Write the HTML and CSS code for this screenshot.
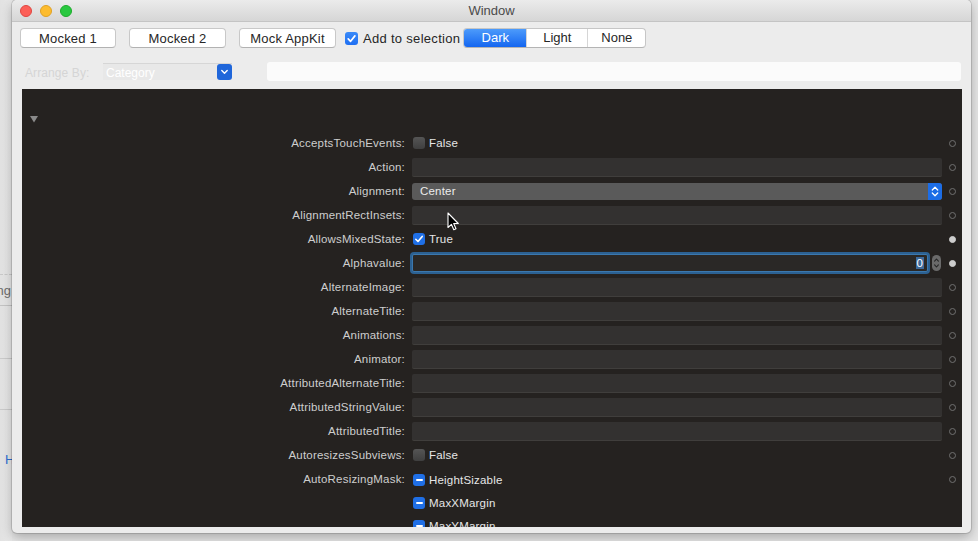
FILE: index.html
```html
<!DOCTYPE html>
<html>
<head>
<meta charset="utf-8">
<title>Window</title>
<link rel="stylesheet" href="styles.css">
</head>
<body>
<div class="screen">
  <div class="behind">
    <div class="bh-a"></div>
    <div class="bh-text"><span>Spacing</span></div>
    <div class="bh-b"></div>
    <div class="bh-c"></div>
    <div class="bh-gap"></div>
    <div class="bh-link">Help</div>
  </div>

  <div class="window">
    <div class="titlebar">
      <div class="lights">
        <span class="light red"></span>
        <span class="light yellow"></span>
        <span class="light green"></span>
      </div>
      <div class="title">Window</div>
      <div></div>
    </div>

    <div class="toolbar">
      <button class="btn w96">Mocked 1</button>
      <button class="btn w97">Mocked 2</button>
      <button class="btn w97 last">Mock AppKit</button>
      <span class="tb-check"><svg viewBox="0 0 13 13" width="13" height="13"><path d="M3.2 6.9 L5.6 9.3 L9.9 3.9" fill="none" stroke="#fff" stroke-width="1.7" stroke-linecap="round" stroke-linejoin="round"/></svg></span>
      <span class="tb-label">Add to selection</span>
      <div class="seg">
        <span class="seg-item on dark">Dark</span>
        <span class="seg-item light-s">Light</span>
        <span class="seg-item none-s">None</span>
      </div>
    </div>

    <div class="filterbar">
      <span class="arrange">Arrange By:</span>
      <div class="popup-light">
        <span class="pl-text">Category</span>
        <span class="pl-btn"><svg viewBox="0 0 15 16" width="15" height="16"><path d="M4.8 6.6 L7.5 9.3 L10.2 6.6" fill="none" stroke="#fff" stroke-width="1.4" stroke-linecap="round" stroke-linejoin="round"/></svg></span>
      </div>
      <div class="search"></div>
    </div>

    <div class="panel">
      <div class="disclosure"><svg width="8" height="7" viewBox="0 0 8 7"><path d="M0 0 H8 L4 6.5 Z" fill="#8a8a8a"/></svg></div>
      <div class="rows">
        <div class="label">AcceptsTouchEvents:</div>
        <div class="cv"><span class="check off"></span><span>False</span></div>
        <div class="ind"><span class="dot"></span></div>

        <div class="label">Action:</div>
        <div class="field"></div>
        <div class="ind"><span class="dot"></span></div>

        <div class="label">Alignment:</div>
        <div class="popup-dark"><span class="pd-text">Center</span><span class="pd-btn"><svg viewBox="0 0 14 17" width="14" height="17"><path d="M4.3 7 L7 4.3 L9.7 7 M4.3 10 L7 12.7 L9.7 10" fill="none" stroke="#fff" stroke-width="1.3" stroke-linecap="round" stroke-linejoin="round"/></svg></span></div>
        <div class="ind"><span class="dot"></span></div>

        <div class="label">AlignmentRectInsets:</div>
        <div class="field"></div>
        <div class="ind"><span class="dot"></span></div>

        <div class="label">AllowsMixedState:</div>
        <div class="cv"><span class="check on"><svg viewBox="0 0 12 12" width="12" height="12"><path d="M2.8 6.3 L5 8.5 L9.2 3.4" fill="none" stroke="#fff" stroke-width="1.6" stroke-linecap="round" stroke-linejoin="round"/></svg></span><span>True</span></div>
        <div class="ind"><span class="dot filled"></span></div>

        <div class="label">Alphavalue:</div>
        <div class="alpha">
          <div class="alpha-field"><span class="sel">0</span></div>
          <span class="stepper"><svg viewBox="0 0 9 16" width="9" height="16"><path d="M2.6 6.2 L4.5 4 L6.4 6.2 M2.6 9.8 L4.5 12 L6.4 9.8" fill="none" stroke="#262626" stroke-width="1.1" stroke-linecap="round" stroke-linejoin="round"/></svg></span>
        </div>
        <div class="ind"><span class="dot filled"></span></div>

        <div class="label">AlternateImage:</div>
        <div class="field"></div>
        <div class="ind"><span class="dot"></span></div>

        <div class="label">AlternateTitle:</div>
        <div class="field"></div>
        <div class="ind"><span class="dot"></span></div>

        <div class="label">Animations:</div>
        <div class="field"></div>
        <div class="ind"><span class="dot"></span></div>

        <div class="label">Animator:</div>
        <div class="field"></div>
        <div class="ind"><span class="dot"></span></div>

        <div class="label">AttributedAlternateTitle:</div>
        <div class="field"></div>
        <div class="ind"><span class="dot"></span></div>

        <div class="label">AttributedStringValue:</div>
        <div class="field"></div>
        <div class="ind"><span class="dot"></span></div>

        <div class="label">AttributedTitle:</div>
        <div class="field"></div>
        <div class="ind"><span class="dot"></span></div>

        <div class="label">AutoresizesSubviews:</div>
        <div class="cv"><span class="check off"></span><span>False</span></div>
        <div class="ind"><span class="dot"></span></div>

        <div class="label top">AutoResizingMask:</div>
        <div class="masklist">
          <div class="cv mitem"><span class="check mixed"><span class="dash"></span></span><span>HeightSizable</span></div>
          <div class="cv mitem"><span class="check mixed"><span class="dash"></span></span><span>MaxXMargin</span></div>
          <div class="cv mitem"><span class="check mixed"><span class="dash"></span></span><span>MaxYMargin</span></div>
        </div>
        <div class="ind top"><span class="dot"></span></div>
      </div>
    </div>
  </div>

  <svg class="cursor" width="13" height="19" viewBox="0 0 13 19"><path d="M1 1 L1 15.5 L4.4 12.3 L6.8 17.8 L9 16.8 L6.7 11.5 L11.3 11.5 Z" fill="#000" stroke="#fff" stroke-width="1.1" stroke-linejoin="round"/></svg>
</div>
</body>
</html>
```

FILE: styles.css
```css
html, body {
  margin: 0;
  padding: 0;
}

body {
  width: 978px;
  height: 541px;
  overflow: hidden;
}

.screen {
  position: relative;
  width: 978px;
  height: 541px;
  overflow: hidden;
  display: flex;
  align-items: flex-start;
  background: #e6e6e6;
  font-family: "Liberation Sans", Arial, sans-serif;
}

/* app behind the window */
.behind {
  width: 12px;
  height: 541px;
  flex-shrink: 0;
  display: flex;
  flex-direction: column;
  overflow: hidden;
  background: linear-gradient(90deg, #e2e2e2, #e9e9e9);
}

.bh-a {
  height: 274px;
  border-bottom: 1px dashed #c9c9c9;
  flex-shrink: 0;
}

.bh-text {
  height: 30px;
  flex-shrink: 0;
  border-bottom: 1px solid #c4c4c4;
  display: flex;
  justify-content: flex-end;
  align-items: center;
  font-size: 13px;
  color: #6e6e6e;
  white-space: nowrap;
  padding-right: 1px;
}

.bh-b {
  height: 52px;
  flex-shrink: 0;
  border-bottom: 1px solid #cbcbcb;
}

.bh-c {
  height: 50px;
  flex-shrink: 0;
  border-bottom: 1px solid #cbcbcb;
}

.bh-gap {
  height: 42px;
  flex-shrink: 0;
}

.bh-link {
  padding-left: 5px;
  font-size: 13px;
  line-height: 15px;
  color: #2f6fd3;
  white-space: nowrap;
}

/* window */
.window {
  width: 959px;
  height: 533px;
  flex-shrink: 0;
  background: #ececec;
  border-radius: 5px;
  overflow: hidden;
  box-shadow: 0 0 0 1px rgba(0, 0, 0, 0.13), 0 4px 12px rgba(0, 0, 0, 0.28);
}

.titlebar {
  height: 22px;
  box-sizing: border-box;
  border-bottom: 1px solid #c4c4c4;
  background: linear-gradient(#ebebeb, #d6d6d6);
  display: grid;
  grid-template-columns: 1fr auto 1fr;
  align-items: center;
}

.lights {
  display: flex;
  gap: 8px;
  padding-left: 8px;
}

.light {
  width: 12px;
  height: 12px;
  border-radius: 50%;
  box-sizing: border-box;
}

.red { background: #fc5f57; border: 1px solid #df453f; }
.yellow { background: #fdbc2e; border: 1px solid #dfa024; }
.green { background: #29c840; border: 1px solid #1dac2b; }

.title {
  font-size: 13px;
  line-height: 16px;
  padding-top: 1px;
  color: #4b4b4b;
}

/* toolbar */
.toolbar {
  display: flex;
  align-items: center;
  padding: 6px 0 0 8px;
  height: 20px;
}

.btn {
  height: 20px;
  box-sizing: border-box;
  padding: 0;
  margin: 0 13px 0 0;
  font-family: inherit;
  font-size: 13px;
  letter-spacing: 0.2px;
  color: #262626;
  background: #fff;
  border: 1px solid #c8c8c8;
  border-bottom-color: #b2b2b2;
  border-radius: 4px;
}

.w96 { width: 96px; }
.w97 { width: 97px; }
.btn.last { margin-right: 9px; }

.tb-check {
  width: 13px;
  height: 13px;
  border-radius: 3px;
  background: linear-gradient(#3a8af8, #1f6ff2);
  display: flex;
  margin-right: 5px;
}

.tb-label {
  font-size: 13px;
  letter-spacing: 0.3px;
  color: #262626;
  margin-right: 3px;
  white-space: nowrap;
}

.seg {
  display: flex;
  height: 20px;
  box-sizing: border-box;
  border: 1px solid #c6c6c6;
  border-bottom-color: #b4b4b4;
  border-radius: 4px;
  overflow: hidden;
  background: #fff;
}

.seg-item {
  font-size: 13px;
  line-height: 18px;
  text-align: center;
  color: #262626;
  border-left: 1px solid #d6d6d6;
}

.seg-item.on {
  border-left: none;
  color: #fff;
  background: linear-gradient(#4d9bfb, #1466f0);
}

.dark { width: 62px; }
.light-s { width: 60px; }
.none-s { width: 57px; }

/* filter bar */
.filterbar {
  display: flex;
  align-items: center;
  margin-top: 14px;
  height: 19px;
  padding-left: 13px;
}

.arrange {
  width: 78px;
  font-size: 12px;
  letter-spacing: 0.1px;
  line-height: 14px;
  padding-top: 2px;
  color: #d5d5d5;
  white-space: nowrap;
}

.popup-light {
  width: 129px;
  height: 17px;
  box-sizing: border-box;
  display: flex;
  justify-content: space-between;
  align-items: flex-start;
  border-top: 1px solid #d6d6d6;
  background: #e8e8e8;
  margin-right: 35px;
}

.pl-text {
  font-size: 12px;
  color: #fff;
  padding-left: 3px;
  line-height: 18px;
}

.pl-btn {
  width: 15px;
  height: 16px;
  border-radius: 3px;
  background: #1f66da;
  display: flex;
}

.search {
  width: 694px;
  height: 19px;
  border-radius: 3px;
  background: #fbfbfb;
}

/* dark panel */
.panel {
  margin: 8px 0 0 10px;
  width: 940px;
  height: 438px;
  background: #252220;
  overflow: hidden;
}

.disclosure {
  height: 42px;
  box-sizing: border-box;
  padding: 27px 0 0 8px;
}

.disclosure svg {
  display: block;
}

.rows {
  display: grid;
  grid-template-columns: 390px 530px 20px;
  grid-auto-rows: minmax(24px, auto);
  align-items: center;
}

.label {
  text-align: right;
  padding-right: 7px;
  font-size: 11.5px;
  letter-spacing: 0.2px;
  color: #cecece;
  white-space: nowrap;
}

.label.top {
  align-self: start;
  line-height: 24px;
}

.field {
  height: 19px;
  box-sizing: border-box;
  background: #333130;
  border-bottom: 1px solid #403e3c;
  border-radius: 2px;
}

.cv {
  display: flex;
  align-items: center;
  gap: 4px;
  font-size: 11.5px;
  letter-spacing: 0.2px;
  color: #e6e6e6;
}

.check {
  width: 12px;
  height: 12px;
  border-radius: 3px;
  margin-left: 1px;
  display: flex;
  align-items: center;
  justify-content: center;
  flex-shrink: 0;
}

.check.off {
  background: linear-gradient(#555, #3f3f3f);
}

.check.on,
.check.mixed {
  background: #1f6fe6;
}

.dash {
  width: 7px;
  height: 2px;
  border-radius: 1px;
  background: #fff;
}

.popup-dark {
  height: 17px;
  border-radius: 3px;
  background: #5a5a5a;
  display: flex;
  justify-content: space-between;
  align-items: center;
}

.pd-text {
  padding-left: 8px;
  font-size: 11.5px;
  letter-spacing: 0.2px;
  color: #ececec;
}

.pd-btn {
  width: 14px;
  height: 17px;
  border-radius: 0 3px 3px 0;
  background: #1c6de6;
  display: flex;
}

.alpha {
  display: flex;
  align-items: center;
}

.alpha-field {
  width: 516px;
  height: 18px;
  box-sizing: border-box;
  border: 1px solid #3b78ae;
  box-shadow: 0 0 0 2px #2c6192;
  border-radius: 2px;
  background: #2a2826;
  display: flex;
  justify-content: flex-end;
  align-items: center;
  padding-right: 3px;
}

.sel {
  background: #3d6a9b;
  color: #fff;
  font-size: 11.5px;
  line-height: 12px;
  padding: 0 1px;
}

.stepper {
  width: 9px;
  height: 16px;
  margin-left: 4px;
  border-radius: 5px;
  background: #6a6a6a;
  display: flex;
}

.ind {
  display: flex;
  justify-content: center;
  align-items: center;
}

.ind.top {
  align-self: start;
  height: 24px;
}

.dot {
  width: 7px;
  height: 7px;
  box-sizing: border-box;
  border-radius: 50%;
  border: 1px solid #707070;
}

.dot.filled {
  background: #cdcdcd;
  border-color: #cdcdcd;
}

.masklist {
  align-self: start;
  padding-top: 1px;
  display: flex;
  flex-direction: column;
}

.mitem {
  height: 23px;
}

.cursor {
  position: absolute;
  left: 447px;
  top: 212px;
}
```
